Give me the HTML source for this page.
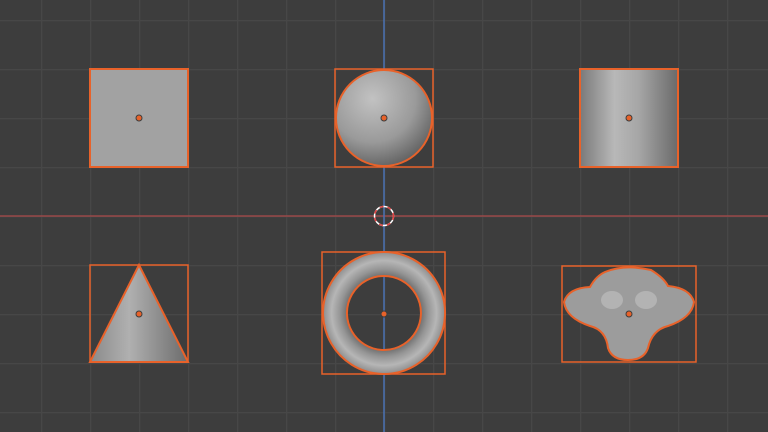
<!DOCTYPE html><html><head><style>body{margin:0;background:#3d3d3d}svg{display:block}</style></head><body>
<svg width="768" height="432" viewBox="0 0 768 432" xmlns="http://www.w3.org/2000/svg">
<defs>
<pattern id="g" x="41" y="20" width="49" height="49" patternUnits="userSpaceOnUse">
<path d="M0 0H49M0 0V49" stroke="#474747" stroke-width="2.5" fill="none"/></pattern>
<linearGradient id="cyl" x1="0" x2="1"><stop offset="0" stop-color="#7a7a7a"/><stop offset=".35" stop-color="#b8b8b8"/><stop offset=".6" stop-color="#a6a6a6"/><stop offset="1" stop-color="#6a6a6a"/></linearGradient>
<radialGradient id="sph" cx=".38" cy=".3" r=".75"><stop offset="0" stop-color="#c2c2c2"/><stop offset=".6" stop-color="#9a9a9a"/><stop offset="1" stop-color="#5e5e5e"/></radialGradient>
<linearGradient id="cone" x1="0" x2="1"><stop offset="0" stop-color="#8a8a8a"/><stop offset=".4" stop-color="#b0b0b0"/><stop offset="1" stop-color="#6c6c6c"/></linearGradient>
<radialGradient id="tor" cx=".5" cy=".5" r=".5"><stop offset=".6" stop-color="#6e6e6e"/><stop offset=".72" stop-color="#959595"/><stop offset=".86" stop-color="#b6b6b6"/><stop offset="1" stop-color="#8e8e8e"/></radialGradient>
</defs>
<rect width="768" height="432" fill="#3d3d3d"/>
<rect width="768" height="432" fill="url(#g)"/>
<line x1="0" y1="216" x2="768" y2="216" stroke="#9a4848" stroke-width="1.5"/>
<line x1="384" y1="0" x2="384" y2="432" stroke="#4a72b4" stroke-width="1.5"/>
<g stroke="#e8622a" stroke-width="2" fill="none">
<rect x="90" y="69" width="98" height="98" fill="#a2a2a2"/>
<rect x="335" y="69" width="98" height="98" stroke-width="1.5"/>
<circle cx="384" cy="118" r="48" fill="url(#sph)"/>
<rect x="580" y="69" width="98" height="98" fill="url(#cyl)"/>
<rect x="90" y="265" width="98" height="97" stroke-width="1.5"/>
<polygon points="139,265 90,362 188,362" fill="url(#cone)"/>
<rect x="322" y="252" width="123" height="122" stroke-width="1.5"/>
<path d="M384 252a61 61 0 1 0 .1 0ZM384 276a37 37 0 1 1-.1 0Z" fill="url(#tor)" fill-rule="evenodd"/>
<rect x="562" y="266" width="134" height="96" stroke-width="1.5"/>
<path d="M605 272 Q625 264 651 270 Q664 278 668 286 Q690 288 694 302 Q692 318 668 326 Q652 330 648 348 Q644 360 628 360 Q612 360 608 348 Q606 330 590 326 Q566 318 564 302 Q568 288 590 287 Q596 276 605 272 Z" fill="#9c9c9c"/>
</g>
<g fill="#bdbdbd" opacity=".7"><ellipse cx="612" cy="300" rx="11" ry="9"/><ellipse cx="646" cy="300" rx="11" ry="9"/></g>
<g fill="#e8622a" stroke="#3d3d3d" stroke-width="1"><circle cx="139" cy="118" r="3"/><circle cx="384" cy="118" r="3"/><circle cx="629" cy="118" r="3"/><circle cx="139" cy="314" r="3"/><circle cx="384" cy="314" r="3"/><circle cx="629" cy="314" r="3"/></g>
<circle cx="384" cy="216" r="9.5" fill="none" stroke="#fff" stroke-width="1.5"/>
<circle cx="384" cy="216" r="9.5" fill="none" stroke="#e04040" stroke-width="1.5" stroke-dasharray="4 4"/>
</svg></body></html>
